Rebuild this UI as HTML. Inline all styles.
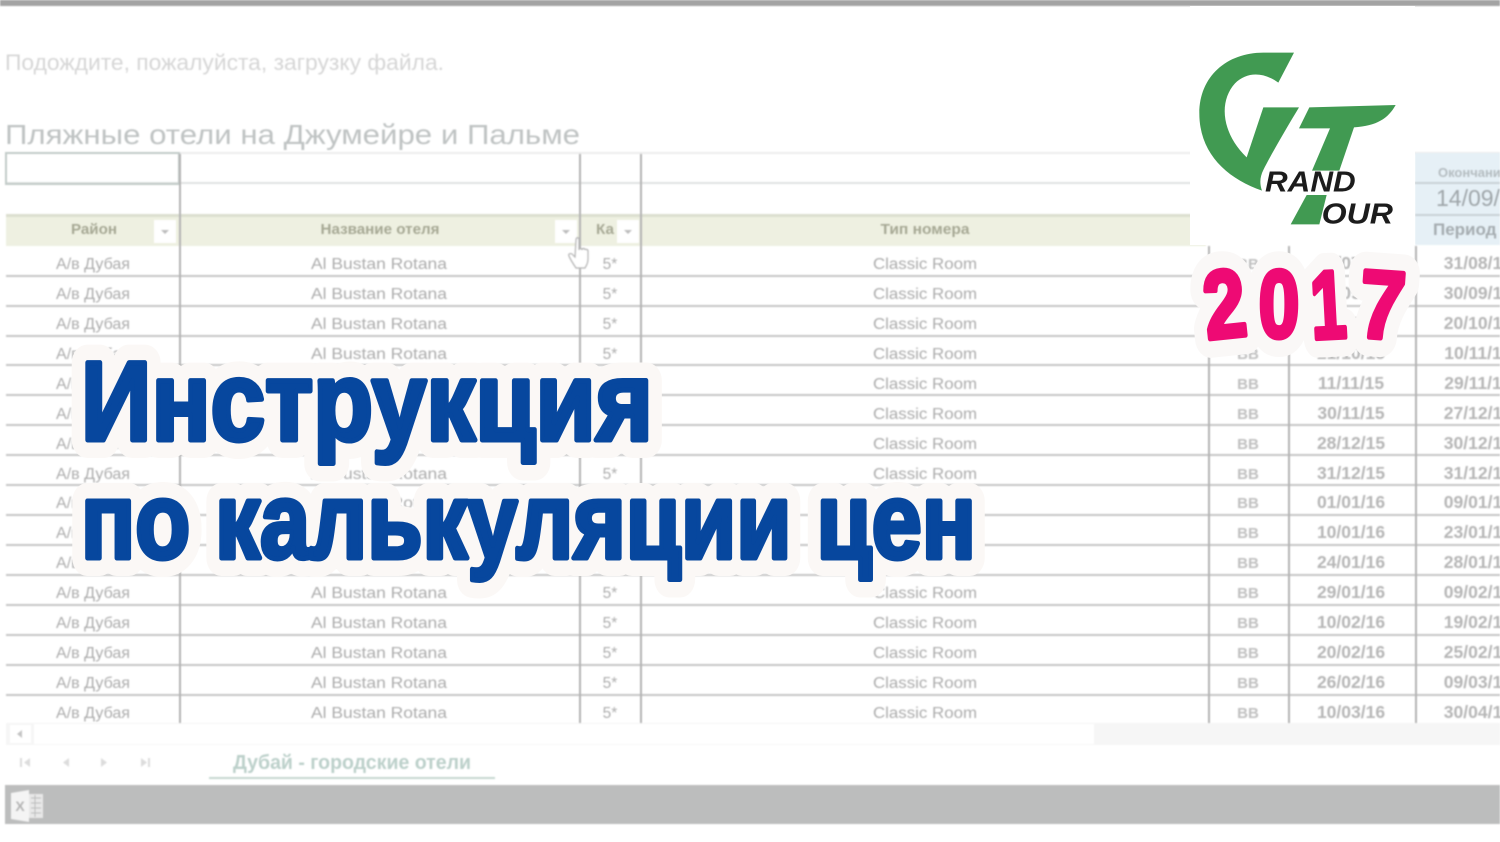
<!DOCTYPE html>
<html lang="ru"><head><meta charset="utf-8"><title>Инструкция по калькуляции цен</title>
<style>
html,body{margin:0;padding:0;background:#fff;width:1500px;height:842px;overflow:hidden}
svg{position:absolute;left:0;top:0;display:block}
text{font-family:"Liberation Sans",sans-serif}
.t text{font-size:15.5px;fill:#adadad;text-anchor:middle}
.d text{font-size:17.5px;fill:#b6b6b6;text-anchor:middle;font-weight:bold}
.d text.b{font-size:15px;fill:#c0c0c0}
.h{font-size:15px;font-weight:bold;fill:#a6a894;text-anchor:middle}
.ttl{font-weight:bold;fill:#07479e;stroke:#fbf8f6;stroke-width:36px;stroke-linejoin:round;paint-order:stroke}
.ttl2{font-weight:bold;fill:#07479e;stroke:#07479e;stroke-width:5px;stroke-linejoin:round}
.yr{font-weight:bold;font-size:96px;fill:#ee0a74;stroke:#faf8f7;stroke-width:38px;stroke-linejoin:round;paint-order:stroke;text-anchor:middle}
.yr2{font-weight:bold;font-size:96px;fill:#ee0a74;stroke:#ee0a74;stroke-width:5px;stroke-linejoin:round;text-anchor:middle}
</style></head><body>
<svg width="1500" height="842" viewBox="0 0 1500 842" xmlns="http://www.w3.org/2000/svg">
<rect width="1500" height="842" fill="#fff"/>
<g style="filter:blur(.9px)">
<rect width="1500" height="6" fill="#a3a3a3"/>
<text x="5" y="70" font-size="22" fill="#d6d6d6" textLength="439" lengthAdjust="spacingAndGlyphs">Подождите, пожалуйста, загрузку файла.</text>
<text x="5" y="144" font-size="28" fill="#bfc3c3" textLength="575" lengthAdjust="spacingAndGlyphs">Пляжные отели на Джумейре и Пальме</text>
<rect x="6" y="216" width="1200" height="30" fill="#eef0e1"/>
<rect x="6" y="152" width="1494" height="2" fill="#ededed"/>
<rect x="6" y="182" width="1494" height="2" fill="#e0e2e2"/>
<rect x="6" y="214" width="1200" height="3" fill="#dcdfd0"/>
<rect x="1415" y="153" width="85" height="92" fill="#e6f0f6"/>
<rect x="1415" y="182" width="85" height="2" fill="#c9d2d6"/>
<rect x="1415" y="214" width="85" height="2" fill="#c9d2d6"/>
<rect x="6" y="153" width="173" height="31" fill="none" stroke="#c2cbc8" stroke-width="2"/>
<g fill="#c6c6c6">
<rect x="6" y="275" width="1494" height="2"/><rect x="6" y="305" width="1494" height="2"/><rect x="6" y="335" width="1494" height="2"/><rect x="6" y="364" width="1494" height="2"/><rect x="6" y="394" width="1494" height="2"/><rect x="6" y="424" width="1494" height="2"/><rect x="6" y="454" width="1494" height="2"/><rect x="6" y="484" width="1494" height="2"/><rect x="6" y="514" width="1494" height="2"/><rect x="6" y="544" width="1494" height="2"/><rect x="6" y="574" width="1494" height="2"/><rect x="6" y="604" width="1494" height="2"/><rect x="6" y="634" width="1494" height="2"/><rect x="6" y="664" width="1494" height="2"/><rect x="6" y="694" width="1494" height="2"/>
</g>
<g fill="#b4b4b4">
<rect x="179" y="154" width="2" height="570"/><rect x="579" y="154" width="2" height="570"/><rect x="640" y="154" width="2" height="570"/><rect x="1208" y="246" width="2" height="478"/><rect x="1288" y="246" width="2" height="478"/><rect x="1415" y="246" width="2" height="478"/>
</g>
<rect x="154" y="220" width="22" height="23" fill="#fff"/><rect x="555" y="220" width="22" height="23" fill="#fff"/><rect x="617" y="220" width="22" height="23" fill="#fff"/>
<path d="M161 230h8l-4 4zM562 230h8l-4 4zM624 230h8l-4 4z" fill="#bdbdbd"/>
<text class="h" x="94" y="234" textLength="46" lengthAdjust="spacingAndGlyphs">Район</text>
<text class="h" x="380" y="234" textLength="119" lengthAdjust="spacingAndGlyphs">Название отеля</text>
<text class="h" x="605" y="234" textLength="18" lengthAdjust="spacingAndGlyphs">Ка</text>
<text class="h" x="925" y="234" textLength="89" lengthAdjust="spacingAndGlyphs">Тип номера</text>
<text x="1438" y="177" font-size="13" font-weight="bold" fill="#b4bcc0" textLength="70" lengthAdjust="spacingAndGlyphs">Окончание</text>
<text x="1436" y="206" font-size="23" fill="#9fa6aa">14/09/</text>
<text x="1433" y="235" font-size="17" font-weight="bold" fill="#a5acb0">Период</text>
<path d="M576 240c0-3 3-3 3 0v10c0-2 3-2 3 0 0-2 3-2 3 0 0-1 3-1 3 1v8c0 5-2 7-3 9h-9c-2-3-6-9-7-12-1-2 1-3 3-2l3 3z" fill="#fff" stroke="#b3b3b3" stroke-width="1.2"/>
<g class="t">
<text x="93" y="269" textLength="74" lengthAdjust="spacingAndGlyphs">А/в Дубая</text><text x="379" y="269" textLength="136" lengthAdjust="spacingAndGlyphs">Al Bustan Rotana</text><text x="610" y="269">5*</text><text x="925" y="269" textLength="104" lengthAdjust="spacingAndGlyphs">Classic Room</text>
<text x="93" y="299" textLength="74" lengthAdjust="spacingAndGlyphs">А/в Дубая</text><text x="379" y="299" textLength="136" lengthAdjust="spacingAndGlyphs">Al Bustan Rotana</text><text x="610" y="299">5*</text><text x="925" y="299" textLength="104" lengthAdjust="spacingAndGlyphs">Classic Room</text>
<text x="93" y="329" textLength="74" lengthAdjust="spacingAndGlyphs">А/в Дубая</text><text x="379" y="329" textLength="136" lengthAdjust="spacingAndGlyphs">Al Bustan Rotana</text><text x="610" y="329">5*</text><text x="925" y="329" textLength="104" lengthAdjust="spacingAndGlyphs">Classic Room</text>
<text x="93" y="359" textLength="74" lengthAdjust="spacingAndGlyphs">А/в Дубая</text><text x="379" y="359" textLength="136" lengthAdjust="spacingAndGlyphs">Al Bustan Rotana</text><text x="610" y="359">5*</text><text x="925" y="359" textLength="104" lengthAdjust="spacingAndGlyphs">Classic Room</text>
<text x="93" y="389" textLength="74" lengthAdjust="spacingAndGlyphs">А/в Дубая</text><text x="379" y="389" textLength="136" lengthAdjust="spacingAndGlyphs">Al Bustan Rotana</text><text x="610" y="389">5*</text><text x="925" y="389" textLength="104" lengthAdjust="spacingAndGlyphs">Classic Room</text>
<text x="93" y="419" textLength="74" lengthAdjust="spacingAndGlyphs">А/в Дубая</text><text x="379" y="419" textLength="136" lengthAdjust="spacingAndGlyphs">Al Bustan Rotana</text><text x="610" y="419">5*</text><text x="925" y="419" textLength="104" lengthAdjust="spacingAndGlyphs">Classic Room</text>
<text x="93" y="449" textLength="74" lengthAdjust="spacingAndGlyphs">А/в Дубая</text><text x="379" y="449" textLength="136" lengthAdjust="spacingAndGlyphs">Al Bustan Rotana</text><text x="610" y="449">5*</text><text x="925" y="449" textLength="104" lengthAdjust="spacingAndGlyphs">Classic Room</text>
<text x="93" y="479" textLength="74" lengthAdjust="spacingAndGlyphs">А/в Дубая</text><text x="379" y="479" textLength="136" lengthAdjust="spacingAndGlyphs">Al Bustan Rotana</text><text x="610" y="479">5*</text><text x="925" y="479" textLength="104" lengthAdjust="spacingAndGlyphs">Classic Room</text>
<text x="93" y="508" textLength="74" lengthAdjust="spacingAndGlyphs">А/в Дубая</text><text x="379" y="508" textLength="136" lengthAdjust="spacingAndGlyphs">Al Bustan Rotana</text><text x="610" y="508">5*</text><text x="925" y="508" textLength="104" lengthAdjust="spacingAndGlyphs">Classic Room</text>
<text x="93" y="538" textLength="74" lengthAdjust="spacingAndGlyphs">А/в Дубая</text><text x="379" y="538" textLength="136" lengthAdjust="spacingAndGlyphs">Al Bustan Rotana</text><text x="610" y="538">5*</text><text x="925" y="538" textLength="104" lengthAdjust="spacingAndGlyphs">Classic Room</text>
<text x="93" y="568" textLength="74" lengthAdjust="spacingAndGlyphs">А/в Дубая</text><text x="379" y="568" textLength="136" lengthAdjust="spacingAndGlyphs">Al Bustan Rotana</text><text x="610" y="568">5*</text><text x="925" y="568" textLength="104" lengthAdjust="spacingAndGlyphs">Classic Room</text>
<text x="93" y="598" textLength="74" lengthAdjust="spacingAndGlyphs">А/в Дубая</text><text x="379" y="598" textLength="136" lengthAdjust="spacingAndGlyphs">Al Bustan Rotana</text><text x="610" y="598">5*</text><text x="925" y="598" textLength="104" lengthAdjust="spacingAndGlyphs">Classic Room</text>
<text x="93" y="628" textLength="74" lengthAdjust="spacingAndGlyphs">А/в Дубая</text><text x="379" y="628" textLength="136" lengthAdjust="spacingAndGlyphs">Al Bustan Rotana</text><text x="610" y="628">5*</text><text x="925" y="628" textLength="104" lengthAdjust="spacingAndGlyphs">Classic Room</text>
<text x="93" y="658" textLength="74" lengthAdjust="spacingAndGlyphs">А/в Дубая</text><text x="379" y="658" textLength="136" lengthAdjust="spacingAndGlyphs">Al Bustan Rotana</text><text x="610" y="658">5*</text><text x="925" y="658" textLength="104" lengthAdjust="spacingAndGlyphs">Classic Room</text>
<text x="93" y="688" textLength="74" lengthAdjust="spacingAndGlyphs">А/в Дубая</text><text x="379" y="688" textLength="136" lengthAdjust="spacingAndGlyphs">Al Bustan Rotana</text><text x="610" y="688">5*</text><text x="925" y="688" textLength="104" lengthAdjust="spacingAndGlyphs">Classic Room</text>
<text x="93" y="718" textLength="74" lengthAdjust="spacingAndGlyphs">А/в Дубая</text><text x="379" y="718" textLength="136" lengthAdjust="spacingAndGlyphs">Al Bustan Rotana</text><text x="610" y="718">5*</text><text x="925" y="718" textLength="104" lengthAdjust="spacingAndGlyphs">Classic Room</text>
</g>
<g class="d">
<text class="b" x="1248" y="269">BB</text><text x="1351" y="269">01/07/15</text><text x="1473" y="269">31/08/1</text>
<text class="b" x="1248" y="299">BB</text><text x="1351" y="299">01/09/15</text><text x="1473" y="299">30/09/1</text>
<text class="b" x="1248" y="329">BB</text><text x="1351" y="329">01/10/15</text><text x="1473" y="329">20/10/1</text>
<text class="b" x="1248" y="359">BB</text><text x="1351" y="359">21/10/15</text><text x="1473" y="359">10/11/1</text>
<text class="b" x="1248" y="389">BB</text><text x="1351" y="389">11/11/15</text><text x="1473" y="389">29/11/1</text>
<text class="b" x="1248" y="419">BB</text><text x="1351" y="419">30/11/15</text><text x="1473" y="419">27/12/1</text>
<text class="b" x="1248" y="449">BB</text><text x="1351" y="449">28/12/15</text><text x="1473" y="449">30/12/1</text>
<text class="b" x="1248" y="479">BB</text><text x="1351" y="479">31/12/15</text><text x="1473" y="479">31/12/1</text>
<text class="b" x="1248" y="508">BB</text><text x="1351" y="508">01/01/16</text><text x="1473" y="508">09/01/1</text>
<text class="b" x="1248" y="538">BB</text><text x="1351" y="538">10/01/16</text><text x="1473" y="538">23/01/1</text>
<text class="b" x="1248" y="568">BB</text><text x="1351" y="568">24/01/16</text><text x="1473" y="568">28/01/1</text>
<text class="b" x="1248" y="598">BB</text><text x="1351" y="598">29/01/16</text><text x="1473" y="598">09/02/1</text>
<text class="b" x="1248" y="628">BB</text><text x="1351" y="628">10/02/16</text><text x="1473" y="628">19/02/1</text>
<text class="b" x="1248" y="658">BB</text><text x="1351" y="658">20/02/16</text><text x="1473" y="658">25/02/1</text>
<text class="b" x="1248" y="688">BB</text><text x="1351" y="688">26/02/16</text><text x="1473" y="688">09/03/1</text>
<text class="b" x="1248" y="718">BB</text><text x="1351" y="718">10/03/16</text><text x="1473" y="718">30/04/1</text>
</g>
<rect x="0" y="723" width="1500" height="62" fill="#fff"/>
<rect x="6" y="723" width="1494" height="22" fill="#f6f6f6"/>
<rect x="34" y="724" width="1060" height="20" fill="#fff"/>
<rect x="10" y="725" width="21" height="18" fill="#fff"/>
<path d="M22 730l-5 4 5 4z" fill="#c4c4c4"/>
<g fill="#dcdcdc"><path d="M20 758h2v9h-2zM30 758l-6 4.500 6 4.500zM69 758l-6 4.500 6 4.500zM101 758l6 4.500-6 4.500zM141 758l6 4.500-6 4.500zM148 758h2v9h-2z"/></g>
<rect x="209" y="746" width="286" height="32" fill="#fff"/>
<rect x="209" y="777" width="286" height="2" fill="#c5d8d0"/>
<text x="352" y="769" font-size="20" font-weight="bold" fill="#bcd0ca" text-anchor="middle" textLength="238" lengthAdjust="spacingAndGlyphs">Дубай - городские отели</text>
<rect x="5" y="785" width="1495" height="39" fill="#bcbdbd"/>
<path d="M11 793l18-3v32l-18-3z" fill="#f4f4f4"/>
<rect x="29" y="794" width="14" height="24" fill="#e8e8e8"/>
<path d="M31 798h10M31 803h10M31 808h10M31 813h10M35 795v22" stroke="#bcbdbd" stroke-width="1"/>
<text x="20" y="811" font-size="14" font-weight="bold" fill="#b5b5b5" text-anchor="middle">X</text>
</g>
<rect x="1190" y="6" width="225" height="239" fill="#fff"/>
<svg x="1150" y="0" width="350" height="370" viewBox="0 0 1050 1110">
<path fill="#419a52" d="M432 158L385 248C340 215 290 215 255 250C205 305 215 400 290 472L340 322H447C400 400 360 470 340 510C330 530 328 550 336 572C230 535 148 460 148 340C148 230 230 158 340 158Z"/>
<path fill="#419a52" d="M478 322L737 315C715 355 680 378 612 382L568 512H486L540 385H447Z"/>
<path fill="#419a52" d="M470 585H530L508 673H422Z"/>
<text x="345" y="574" font-size="86" font-weight="bold" font-style="italic" fill="#1c1c1c" textLength="272" lengthAdjust="spacingAndGlyphs">RAND</text>
<text x="515" y="671" font-size="86" font-weight="bold" font-style="italic" fill="#1c1c1c" textLength="214" lengthAdjust="spacingAndGlyphs">OUR</text>
</svg>
<text class="yr" transform="translate(1228 337) rotate(-6) scale(.78 1)">2</text>
<text class="yr" transform="translate(1279 337) scale(.76 1)">0</text>
<text class="yr" transform="translate(1330 338) rotate(-3) scale(.66 1)">1</text>
<text class="yr" transform="translate(1380 338) rotate(4) scale(.85 1)">7</text>
<text class="yr2" transform="translate(1228 337) rotate(-6) scale(.78 1)">2</text>
<text class="yr2" transform="translate(1279 337) scale(.76 1)">0</text>
<text class="yr2" transform="translate(1330 338) rotate(-3) scale(.66 1)">1</text>
<text class="yr2" transform="translate(1380 338) rotate(4) scale(.85 1)">7</text>
<text class="ttl" x="81" y="440" font-size="112" textLength="572" lengthAdjust="spacingAndGlyphs">Инструкция</text>
<text class="ttl" x="81" y="558" font-size="108" textLength="895" lengthAdjust="spacingAndGlyphs">по калькуляции цен</text>
<text class="ttl2" x="81" y="440" font-size="112" textLength="572" lengthAdjust="spacingAndGlyphs">Инструкция</text>
<text class="ttl2" x="81" y="558" font-size="108" textLength="895" lengthAdjust="spacingAndGlyphs">по калькуляции цен</text>
</svg>
</body></html>
